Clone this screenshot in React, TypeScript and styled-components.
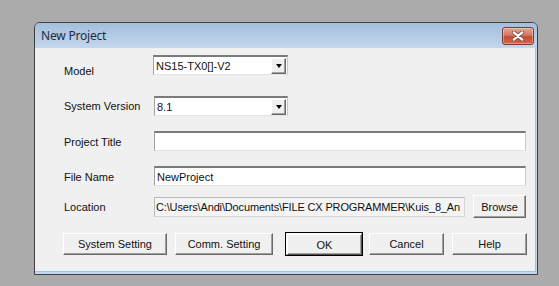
import React from "react";
import styled, { createGlobalStyle } from "styled-components";

const Global = createGlobalStyle`
  html, body { margin: 0; padding: 0; background: #ababab; }
  body { width: 559px; height: 286px; overflow: hidden; }
  * { box-sizing: border-box; }
`;

const Screen = styled.div`
  width: 559px;
  height: 286px;
  padding: 22px 0 0 34px;
  background: #ababab;
`;

const Window = styled.div`
  width: 504px;
  height: 253px;
  border: 1px solid #3c3f44;
  border-radius: 6px 6px 0 0;
  background: #c4d8ee;
  display: flex;
  flex-direction: column;
  overflow: hidden;
`;

const TitleBar = styled.div`
  height: 25px;
  flex: none;
  display: flex;
  justify-content: space-between;
  align-items: flex-start;
  padding: 0 3px 0 6px;
  background: linear-gradient(#a3bedc, #b7cde6 60%, #c3d7ec);
`;

const Title = styled.span`
  font-family: "Noto Sans", "Open Sans", sans-serif;
  font-size: 12px;
  line-height: 25px;
  color: #1c2b3d;
  letter-spacing: -0.2px;
`;

const CloseButton = styled.div`
  margin-top: 4px;
  width: 32px;
  height: 18px;
  border: 1px solid #7d3a31;
  border-radius: 3px;
  background: linear-gradient(#e3a496, #d47864 45%, #c44b33 55%, #d2664d);
  box-shadow: inset 0 0 0 1px rgba(255, 255, 255, 0.35);
  display: flex;
  align-items: center;
  justify-content: center;
`;

const Body = styled.div`
  flex: 1;
  background: #f0f0f0;
  margin: 0 1px 2px 0;
  border-right: 1px solid #8fcbe3;
  border-bottom: 1px solid #8fcbe3;
  padding: 7px 9px 0 29px;
  display: flex;
  flex-direction: column;
  font-family: "Liberation Sans", Arial, sans-serif;
  font-size: 11px;
  color: #111;
`;

const Row = styled.div<{ $gap: number; $h?: number }>`
  display: flex;
  align-items: center;
  margin-top: ${(p) => p.$gap}px;
  height: ${(p) => p.$h ?? 20}px;
`;

const Label = styled.span<{ $drop?: number }>`
  width: 90px;
  flex: none;
  position: relative;
  top: ${(p) => p.$drop ?? 0}px;
`;

const Sunken = styled.div<{ $w: number }>`
  width: ${(p) => p.$w}px;
  height: 20px;
  background: #fff;
  border-style: solid;
  border-width: 2px 1px 1px 1px;
  border-color: #7a7a7a #c8c8c8 #e3e3e3 #a0a0a0;
  display: flex;
  align-items: center;
  padding-left: 2px;
  white-space: nowrap;
  overflow: hidden;
`;

const Combo = styled(Sunken)`
  padding-right: 0;
  justify-content: space-between;
`;

const DropBtn = styled.div`
  width: 15px;
  height: 16px;
  margin-right: 1px;
  background: #f0f0f0;
  border-style: solid;
  border-width: 1px;
  border-color: #fff #696969 #696969 #fff;
  box-shadow: inset -1px -1px 0 #a0a0a0;
  display: flex;
  align-items: center;
  justify-content: center;
`;

const Arrow = styled.span`
  width: 0;
  height: 0;
  border-left: 3.5px solid transparent;
  border-right: 3.5px solid transparent;
  border-top: 4px solid #000;
  margin-top: 1px;
`;

const ReadOnly = styled.div`
  width: 311px;
  height: 20px;
  background: #f4f4f4;
  border: 1px solid #d6d6d6;
  border-top-color: #b9b9b9;
  border-left-color: #b9b9b9;
  display: flex;
  align-items: center;
  padding-left: 1px;
  white-space: nowrap;
  overflow: hidden;
  letter-spacing: -0.15px;
`;

const Button = styled.div<{ $w: number; $default?: boolean; $ml?: number }>`
  width: ${(p) => p.$w}px;
  height: 22px;
  margin-left: ${(p) => p.$ml ?? 0}px;
  flex: none;
  background: #f0f0f0;
  border-style: solid;
  border-width: ${(p) => (p.$default ? "2px 1px 1px 2px" : "1px")};
  border-color: ${(p) => (p.$default ? "#fff #505050 #505050 #fff" : "#fff #696969 #696969 #fff")};
  box-shadow: inset -1px -1px 0 #a0a0a0;
  outline: ${(p) => (p.$default ? "1px solid #000" : "none")};
  display: flex;
  align-items: center;
  justify-content: center;
  white-space: nowrap;
`;

const ButtonRow = styled.div`
  display: flex;
  align-items: center;
  margin-top: 15px;
  margin-left: -1px;
  height: 22px;
`;

function CloseGlyph() {
  return (
    <svg width="12" height="10" viewBox="0 0 12 10">
      <path
        d="M1.5 1 L10.5 9 M10.5 1 L1.5 9"
        stroke="#6b4640"
        strokeWidth="3.6"
        strokeLinecap="round"
      />
      <path
        d="M1.8 1.3 L10.2 8.7 M10.2 1.3 L1.8 8.7"
        stroke="#fff"
        strokeWidth="2.2"
        strokeLinecap="round"
      />
    </svg>
  );
}

export default function App() {
  return (
    <>
      <Global />
      <Screen>
        <Window>
          <TitleBar>
            <Title>New Project</Title>
            <CloseButton>
              <CloseGlyph />
            </CloseButton>
          </TitleBar>
          <Body>
            <Row $gap={0}>
              <Label $drop={6}>Model</Label>
              <Combo $w={135} style={{ marginLeft: -1 }}>
                <span>NS15-TX0[]-V2</span>
                <DropBtn>
                  <Arrow />
                </DropBtn>
              </Combo>
            </Row>
            <Row $gap={21}>
              <Label>System Version</Label>
              <Combo $w={134}>
                <span>8.1</span>
                <DropBtn>
                  <Arrow />
                </DropBtn>
              </Combo>
            </Row>
            <Row $gap={15}>
              <Label $drop={1}>Project Title</Label>
              <Sunken $w={372} />
            </Row>
            <Row $gap={15}>
              <Label $drop={1}>File Name</Label>
              <Sunken $w={372}>NewProject</Sunken>
            </Row>
            <Row $gap={9} $h={23}>
              <Label>Location</Label>
              <ReadOnly>C:\Users\Andi\Documents\FILE CX PROGRAMMER\Kuis_8_An</ReadOnly>
              <Button $w={53} $ml={8} style={{ height: 23 }}>
                Browse
              </Button>
            </Row>
            <ButtonRow>
              <Button $w={104}>System Setting</Button>
              <Button $w={98} $ml={8}>
                Comm. Setting
              </Button>
              <Button $w={76} $ml={13} $default>
                OK
              </Button>
              <Button $w={75} $ml={7}>
                Cancel
              </Button>
              <Button $w={75} $ml={8}>
                Help
              </Button>
            </ButtonRow>
          </Body>
        </Window>
      </Screen>
    </>
  );
}
